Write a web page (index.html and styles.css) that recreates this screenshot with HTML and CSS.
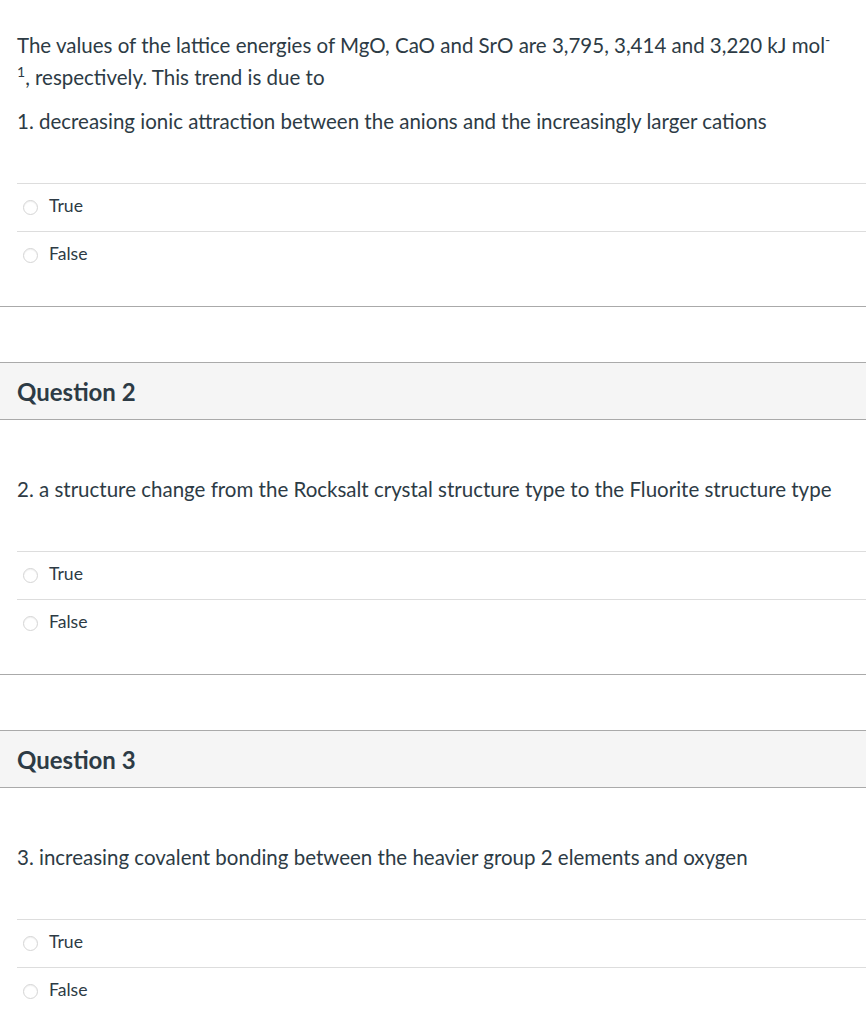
FILE: index.html
```html
<!DOCTYPE html>
<html>
<head>
<meta charset="utf-8">
<link rel="stylesheet" href="styles.css">
</head>
<body>
<div class="question">
  <div class="qtext">
    <p class="intro">The values of the lattice energies of MgO, CaO and SrO are <span class="num">3,795, 3,414 and 3,220</span> kJ mol<sup>-</sup><br><sup>1</sup>, respectively. This trend is due to</p>
    <p class="stmt">1. decreasing ionic attraction between the anions and the increasingly larger cations</p>
  </div>
  <div class="answers">
    <div class="answer"><span class="radio"></span><span class="label">True</span></div>
    <div class="answer"><span class="radio"></span><span class="label">False</span></div>
  </div>
</div>

<div class="question">
  <div class="header">Question 2</div>
  <div class="qtext">
    <p class="stmt">2. a structure change from the Rocksalt crystal structure type to the Fluorite structure type</p>
  </div>
  <div class="answers">
    <div class="answer"><span class="radio"></span><span class="label">True</span></div>
    <div class="answer"><span class="radio"></span><span class="label">False</span></div>
  </div>
</div>

<div class="question">
  <div class="header">Question 3</div>
  <div class="qtext">
    <p class="stmt">3. increasing covalent bonding between the heavier group 2 elements and oxygen</p>
  </div>
  <div class="answers">
    <div class="answer"><span class="radio"></span><span class="label">True</span></div>
    <div class="answer"><span class="radio"></span><span class="label">False</span></div>
  </div>
</div>
</body>
</html>
```
FILE: styles.css
```css
html, body {
  margin: 0;
  padding: 0;
  background: #fff;
}
body {
  font-family: Lato, "Noto Sans", sans-serif;
  color: #2d3b45;
  font-size: 20.5px;
}
.num {
  font-variant-numeric: tabular-nums;
}
.question {
  border-bottom: 1px solid #aaa;
  margin-bottom: 55px;
}
.header {
  background: #f5f5f5;
  border-top: 1px solid #aaa;
  border-bottom: 1px solid #aaa;
  padding: 0 17px;
  height: 56px;
  display: flex;
  align-items: center;
  font-weight: bold;
  font-size: 24px;
}
.qtext {
  padding: 0 17px;
}
.qtext p {
  margin: 0;
  line-height: 30px;
}
.qtext p.intro {
  padding-top: 29px;
  line-height: 32px;
}
.stmt {
  padding-top: 13px;
  padding-bottom: 47px;
}
.header + .qtext .stmt {
  padding-top: 54px;
}
sup {
  font-size: 14px;
  line-height: 0;
  vertical-align: 8px;
}
.answers {
  margin-left: 17px;
  padding-bottom: 27px;
}
.answer {
  border-top: 1px solid #ddd;
  height: 47px;
  display: flex;
  align-items: center;
  font-size: 17.6px;
}
.label {
  margin-bottom: 4px;
}
.radio {
  width: 13px;
  height: 13px;
  border-radius: 50%;
  border: 1px solid #d5d5d5;
  box-shadow: inset 0 1px 1px rgba(0,0,0,0.06);
  margin-left: 6px;
  margin-right: 11px;
  background: #fff;
}
```
